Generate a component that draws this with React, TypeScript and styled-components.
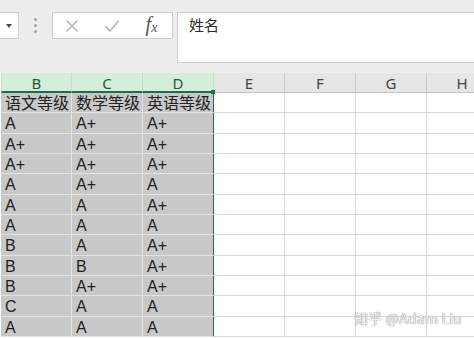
import React from "react"
import styled, { createGlobalStyle } from "styled-components"

const GlobalStyle = createGlobalStyle`
  html, body {
    margin: 0;
    padding: 0;
    overflow: hidden;
    background: #ffffff;
  }
`

const COLUMNS = ["B", "C", "D", "E", "F", "G", "H"]
const SELECTED = 3
const ROW_HEIGHT = 20.33

const ROWS: string[][] = [
  ["语文等级", "数学等级", "英语等级"],
  ["A", "A+", "A+"],
  ["A+", "A+", "A+"],
  ["A+", "A+", "A+"],
  ["A", "A+", "A"],
  ["A", "A", "A+"],
  ["A", "A", "A"],
  ["B", "A", "A+"],
  ["B", "B", "A+"],
  ["B", "A+", "A+"],
  ["C", "A", "A"],
  ["A", "A", "A"],
]

export default function App() {
  return (
    <>
      <GlobalStyle />
      <Screen>
        <FormulaBar>
          <NameBox>
            <Caret />
          </NameBox>
          <Grip>
            <Dot />
            <Dot />
            <Dot />
          </Grip>
          <FuncBox>
            <IconSlot>
              <svg width="16" height="16" viewBox="0 0 16 16">
                <path d="M2.5 2.5 L13.5 13.5 M13.5 2.5 L2.5 13.5" stroke="#b9b9b9" strokeWidth="1.6" fill="none" />
              </svg>
            </IconSlot>
            <IconSlot>
              <svg width="16" height="16" viewBox="0 0 16 16">
                <path d="M1.5 8.5 L6 13 L14.5 3" stroke="#b9b9b9" strokeWidth="1.8" fill="none" />
              </svg>
            </IconSlot>
            <Fx>
              f<sub>x</sub>
            </Fx>
          </FuncBox>
          <FormulaInput>姓名</FormulaInput>
        </FormulaBar>

        <Sheet>
          <HeaderRow>
            {COLUMNS.map((c, i) => (
              <HeaderCell key={c} $active={i < SELECTED}>
                {c}
                {i === SELECTED - 1 && <Handle />}
              </HeaderCell>
            ))}
          </HeaderRow>
          {ROWS.map((row, r) => (
            <Row key={r}>
              {COLUMNS.map((c, i) => (
                <Cell key={c} $selected={i < SELECTED} $edge={i === SELECTED - 1}>
                  {row[i] ?? ""}
                </Cell>
              ))}
            </Row>
          ))}
        </Sheet>

        <Watermark>知乎 @Adam Liu</Watermark>
      </Screen>
    </>
  )
}

const Screen = styled.div`
  position: relative;
  width: 474px;
  height: 338px;
  overflow: hidden;
  background: #ffffff;
  font-family: "Noto Sans CJK SC", "Noto Sans", sans-serif;
`

const FormulaBar = styled.div`
  display: flex;
  align-items: flex-start;
  box-sizing: border-box;
  height: 73px;
  padding-top: 12px;
  background: #ededed;
`

const NameBox = styled.div`
  position: relative;
  box-sizing: border-box;
  width: 19px;
  height: 27px;
  background: #ffffff;
  border: 1px solid #cfcfcf;
  border-left: none;
`

const Caret = styled.span`
  position: absolute;
  left: 6px;
  top: 11px;
  border-left: 3px solid transparent;
  border-right: 3px solid transparent;
  border-top: 4px solid #4a4a4a;
`

const Grip = styled.div`
  width: 33px;
  height: 27px;
  display: flex;
  flex-direction: column;
  align-items: center;
  justify-content: center;
  gap: 3px;
`

const Dot = styled.span`
  width: 3px;
  height: 3px;
  border-radius: 50%;
  background: #a5a5a5;
`

const FuncBox = styled.div`
  box-sizing: border-box;
  width: 121px;
  height: 27px;
  display: grid;
  grid-template-columns: 38px 42px 1fr;
  align-items: center;
  background: #ffffff;
  border: 1px solid #cfcfcf;
`

const IconSlot = styled.span`
  display: flex;
  justify-content: center;
  align-items: center;
`

const Fx = styled.span`
  font-family: "Liberation Serif", serif;
  font-style: italic;
  font-size: 20px;
  color: #555555;
  text-align: center;
  line-height: 22px;
  margin-left: -2px;

  sub {
    font-size: 14px;
    vertical-align: -1px;
  }
`

const FormulaInput = styled.div`
  box-sizing: border-box;
  flex: 1;
  margin-left: 4px;
  height: 51px;
  padding: 1px 11px;
  background: #ffffff;
  border: 1px solid #cfcfcf;
  border-right: none;
  font-size: 15px;
  line-height: 22px;
  color: #2b2b2b;
`

const Sheet = styled.div`
  display: flex;
  flex-direction: column;
  margin-left: 1px;
`

const HeaderRow = styled.div`
  display: grid;
  grid-template-columns: repeat(7, 71px);
  grid-template-rows: 20px;
  height: 20px;
  background: #e6e6e6;
`

const HeaderCell = styled.div<{ $active: boolean }>`
  position: relative;
  box-sizing: border-box;
  display: flex;
  align-items: center;
  justify-content: center;
  padding-top: 2px;
  background: ${(p) => (p.$active ? "#d3eedb" : "#e6e6e6")};
  border-right: 1px solid ${(p) => (p.$active ? "#c4dccb" : "#c9c9c9")};
  border-bottom: ${(p) => (p.$active ? "2px solid #1f6f44" : "1px solid #c3c3c3")};
  font-family: "Noto Sans", sans-serif;
  font-size: 15px;
  line-height: 17px;
  color: ${(p) => (p.$active ? "#24593b" : "#444444")};

  &:first-child {
    border-left: 1px solid #c4dccb;
  }
`

const Handle = styled.span`
  position: absolute;
  right: -2px;
  bottom: -3px;
  width: 4px;
  height: 4px;
  background: #1f6f44;
  z-index: 2;
`

const Row = styled.div`
  display: grid;
  grid-template-columns: repeat(7, 71px);
  grid-template-rows: ${ROW_HEIGHT}px;
  height: ${ROW_HEIGHT}px;
`

const Cell = styled.div<{ $selected: boolean; $edge: boolean }>`
  box-sizing: border-box;
  min-height: 0;
  padding: 3px 0 0 4px;
  white-space: nowrap;
  font-family: "Liberation Sans", "Noto Sans CJK SC", sans-serif;
  font-size: 16px;
  line-height: 16px;
  color: #222222;
  background: ${(p) => (p.$selected ? "#c8c8c8" : "#ffffff")};
  border-bottom: 1px solid ${(p) => (p.$selected ? "#e3e3e3" : "#d9d9d9")};
  border-right: ${(p) =>
    p.$edge ? "2px solid #1f6f44" : p.$selected ? "1px solid #e3e3e3" : "1px solid #d9d9d9"};
  margin-right: ${(p) => (p.$edge ? "-1px" : "0")};
`

const Watermark = styled.div`
  position: absolute;
  right: 12px;
  bottom: 11px;
  font-family: "Noto Sans CJK SC", "Noto Sans", sans-serif;
  font-size: 14px;
  line-height: 18px;
  color: #f2f2f2;
  text-shadow: 0 0 1px #8c8c8c, 0 0 1px #8c8c8c;
  letter-spacing: 0.2px;
`
